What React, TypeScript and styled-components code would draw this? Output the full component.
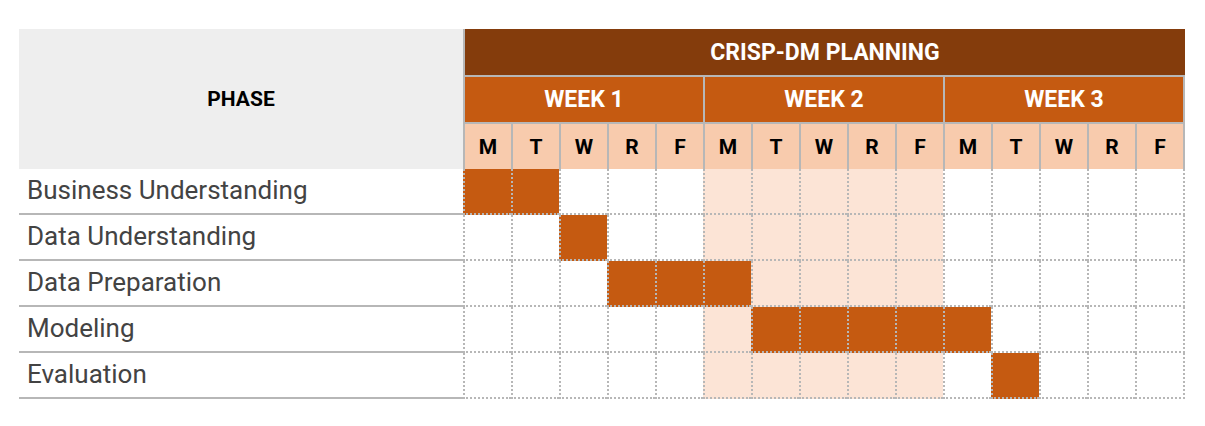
import React from "react";
import styled, { createGlobalStyle, css } from "styled-components";

const GlobalStyle = createGlobalStyle`
  html, body { margin: 0; padding: 0; background: #ffffff; }
  body { font-family: Roboto, "Liberation Sans", Arial, sans-serif; }
`;

const BORDER = "#b7b7b7";
const DAY_COUNT = 15;

const Page = styled.div`
  padding: 29px 19px;
`;

const Sheet = styled.div`
  display: grid;
  grid-template-columns: 444px repeat(14, 48px) 50px;
  grid-template-rows: 48px 47px 45px repeat(5, 46px);
  width: max-content;
`;

const PhaseHeader = styled.div`
  grid-column: 1;
  grid-row: 1 / span 3;
  background: #eeeeee;
  display: flex;
  align-items: center;
  justify-content: center;
  font-weight: 700;
  font-size: 21px;
  color: #000;
`;

const Title = styled.div`
  grid-column: 2 / span 15;
  grid-row: 1;
  background: #843c0c;
  border-left: 2px solid ${BORDER};
  border-bottom: 2px solid ${BORDER};
  box-sizing: border-box;
  display: flex;
  align-items: center;
  justify-content: center;
  color: #ffffff;
  font-weight: 700;
  font-size: 23px;
`;

const Week = styled.div<{ $col: number; $last: boolean }>`
  grid-column: ${(p) => p.$col} / span 5;
  grid-row: 2;
  background: #c55a11;
  border-left: 2px solid ${BORDER};
  border-bottom: 2px solid ${BORDER};
  ${(p) => p.$last && css`border-right: 2px solid ${BORDER};`}
  box-sizing: border-box;
  display: flex;
  align-items: center;
  justify-content: center;
  color: #ffffff;
  font-weight: 700;
  font-size: 23px;
`;

const Day = styled.div<{ $last: boolean }>`
  grid-row: 3;
  background: #f8cbad;
  border-left: 2px solid ${BORDER};
  ${(p) => p.$last && css`border-right: 2px solid ${BORDER};`}
  box-sizing: border-box;
  display: flex;
  align-items: center;
  justify-content: center;
  color: #000000;
  font-weight: 700;
  font-size: 21px;
`;

const PhaseLabel = styled.div`
  grid-column: 1;
  border-bottom: 2px solid ${BORDER};
  box-sizing: border-box;
  display: flex;
  align-items: center;
  padding-left: 8px;
  padding-bottom: 2px;
  color: #434343;
  font-size: 26px;
  white-space: nowrap;
`;

type Fill = "active" | "highlight" | "none";

const fillColor: Record<Fill, string> = {
  active: "#c55a11",
  highlight: "#fce4d6",
  none: "#ffffff",
};

const Cell = styled.div<{ $fill: Fill; $last: boolean }>`
  background: ${(p) => fillColor[p.$fill]};
  border-left: 2px dotted ${BORDER};
  border-bottom: 2px dotted ${BORDER};
  ${(p) => p.$last && css`border-right: 2px dotted ${BORDER};`}
  box-sizing: border-box;
`;

const weeks = ["WEEK 1", "WEEK 2", "WEEK 3"];
const days = ["M", "T", "W", "R", "F"];

const phases: { name: string; start: number; end: number }[] = [
  { name: "Business Understanding", start: 0, end: 1 },
  { name: "Data Understanding", start: 2, end: 2 },
  { name: "Data Preparation", start: 3, end: 5 },
  { name: "Modeling", start: 6, end: 10 },
  { name: "Evaluation", start: 11, end: 11 },
];

export default function App() {
  return (
    <Page>
      <GlobalStyle />
      <Sheet>
        <PhaseHeader>PHASE</PhaseHeader>
        <Title>CRISP-DM PLANNING</Title>
        {weeks.map((w, i) => (
          <Week key={w} $col={2 + i * 5} $last={i === weeks.length - 1}>
            {w}
          </Week>
        ))}
        {weeks.flatMap((w, wi) =>
          days.map((d, di) => (
            <Day key={`${w}-${d}`} $last={wi * 5 + di === DAY_COUNT - 1}>
              {d}
            </Day>
          ))
        )}
        {phases.map((ph) => (
          <React.Fragment key={ph.name}>
            <PhaseLabel>{ph.name}</PhaseLabel>
            {Array.from({ length: DAY_COUNT }, (_, c) => {
              const fill: Fill =
                c >= ph.start && c <= ph.end
                  ? "active"
                  : c >= 5 && c <= 9
                  ? "highlight"
                  : "none";
              return <Cell key={c} $fill={fill} $last={c === DAY_COUNT - 1} />;
            })}
          </React.Fragment>
        ))}
      </Sheet>
    </Page>
  );
}
